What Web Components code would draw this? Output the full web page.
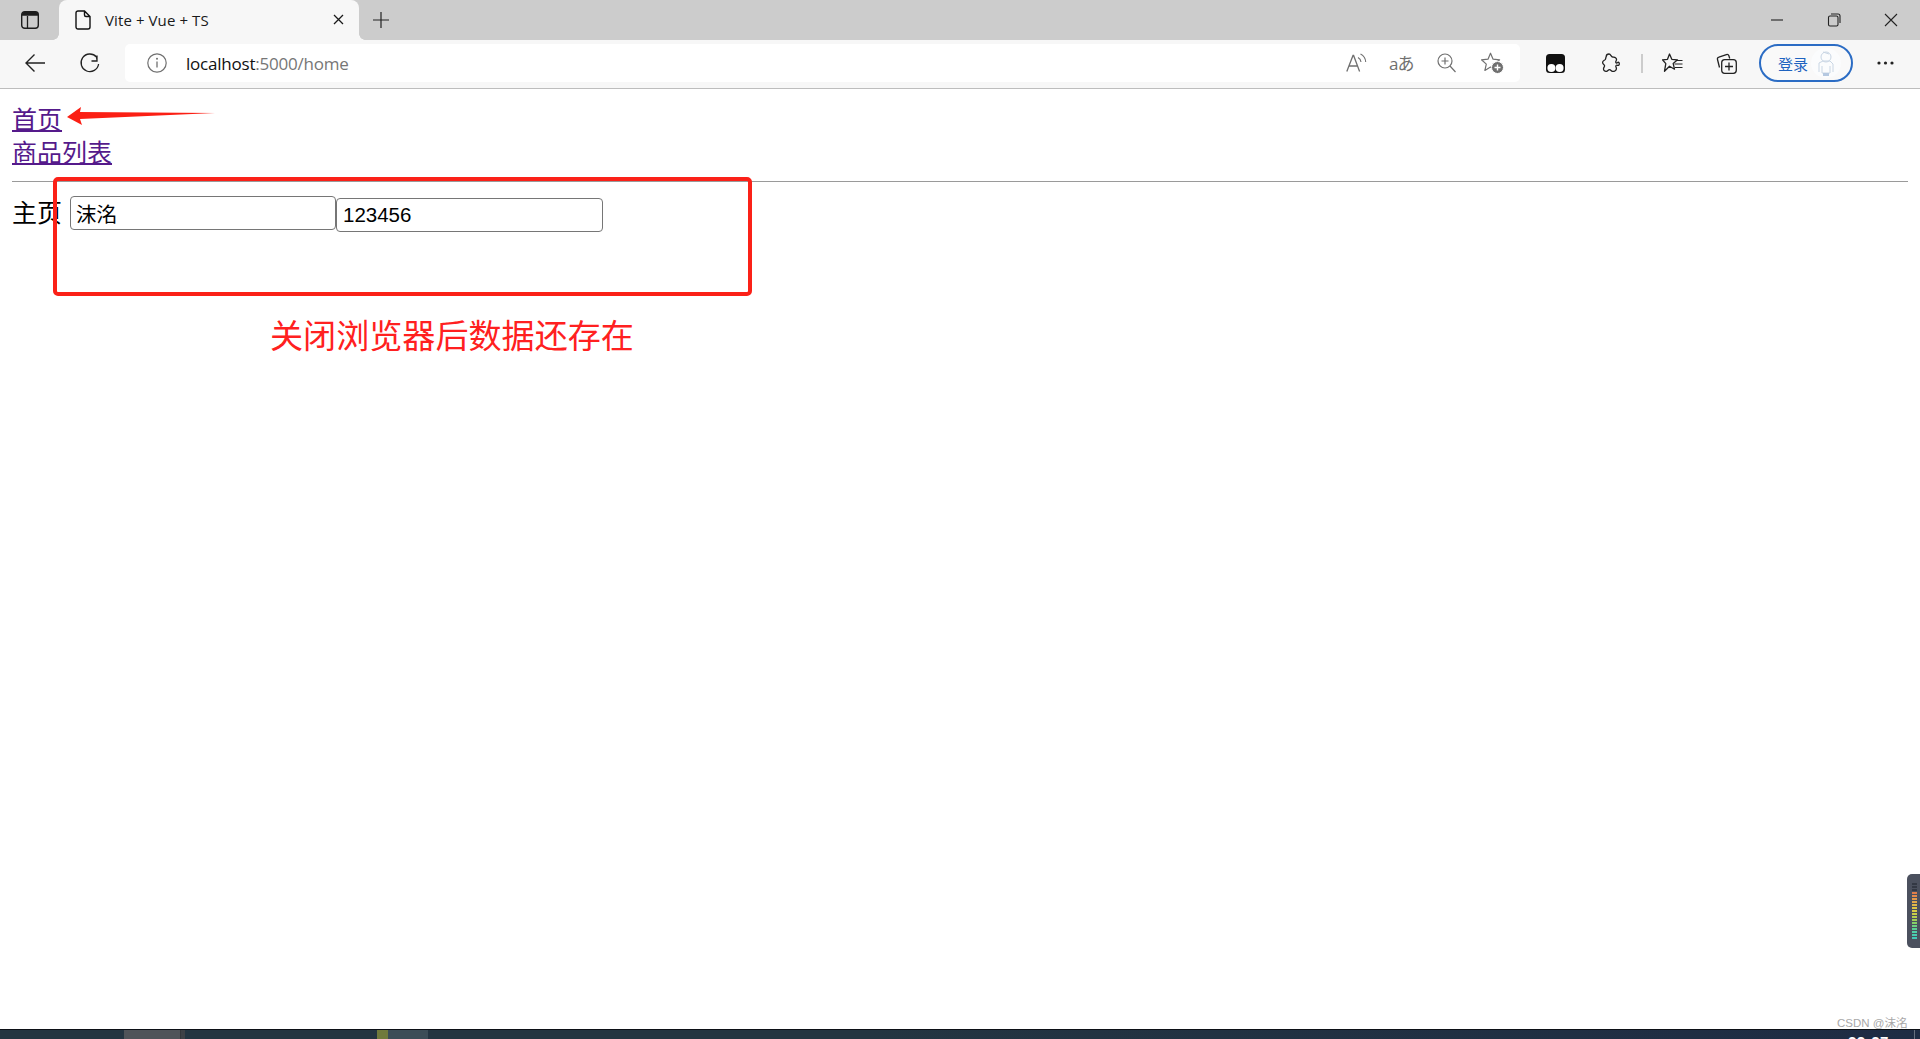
<!doctype html>
<html lang="zh"><head><meta charset="utf-8"><title>Vite + Vue + TS</title>
<style>
html,body{margin:0;height:100%;background:#fff;overflow:hidden}
body{font-family:"Liberation Sans","Noto Sans CJK SC",sans-serif}
x-app{height:1039px}
</style></head><body>
<template id="t-app"><style>
:host{display:flex;flex-direction:column;width:1920px;overflow:hidden}
main{flex:1;position:relative;min-height:0}
</style>
<x-tabstrip></x-tabstrip><x-toolbar></x-toolbar>
<main><x-content></x-content><x-annotations></x-annotations><x-meter></x-meter><x-watermark>CSDN @沫洺</x-watermark></main>
<x-taskbar></x-taskbar></template>

<template id="t-tabstrip"><style>
:host{display:flex;height:40px;background:#ccc;flex:none;align-items:stretch;color:#1a1a1a}
.side{width:59px;display:flex;align-items:center;justify-content:center;box-sizing:border-box}
.tab{width:300px;background:#f7f7f7;border-radius:8px 8px 0 0;display:flex;align-items:center;position:relative;font:15px/38px "Open Sans","Noto Sans",sans-serif;letter-spacing:.1px;padding-bottom:1px;box-sizing:border-box}
.tab::before,.tab::after{content:"";position:absolute;bottom:0;width:6px;height:6px}
.tab::before{left:-6px;background:radial-gradient(circle at 0 0,transparent 5.500px,#f7f7f7 6px)}
.tab::after{right:-6px;background:radial-gradient(circle at 100% 0,transparent 5.500px,#f7f7f7 6px)}
.file{margin-left:16px;width:16px;height:20px}
.title{margin-left:14px;flex:1}
.close{margin-right:15px;display:flex}
.plus{margin-left:14px;width:20px;height:40px;display:flex;align-items:center}
.win{margin-left:auto;display:flex;align-items:center;padding-right:22px;gap:43px}
svg{display:block}
</style>
<div class="side"><svg width="18" height="18" viewBox="0 0 18 18"><rect x=".7" y=".7" width="16.6" height="16.6" rx="3" fill="none" stroke="#1c1c1c" stroke-width="1.4"/><path d="M1 4V3a2 2 0 0 1 2-2h12a2 2 0 0 1 2 2v1.800H1z" fill="#1c1c1c"/><path d="M6.500 5v12" stroke="#1c1c1c" stroke-width="1.300"/></svg></div>
<div class="tab"><svg class="file" viewBox="0 0 16 20"><path d="M3 1h6.500L15 6.500V17a2 2 0 0 1-2 2H3a2 2 0 0 1-2-2V3a2 2 0 0 1 2-2z M9.500 1v4a1.500 1.500 0 0 0 1.500 1.500h4" fill="none" stroke="#111" stroke-width="1.400"/></svg>
<span class="title">Vite + Vue + TS</span>
<span class="close"><svg width="11" height="11" viewBox="0 0 11 11"><path d="M1 1l9 9M10 1l-9 9" stroke="#1a1a1a" stroke-width="1.300"/></svg></span></div>
<div class="plus"><svg width="16" height="16" viewBox="0 0 16 16"><path d="M8 0v16M0 8h16" stroke="#222" stroke-width="1.200"/></svg></div>
<div class="win">
<svg width="14" height="14" viewBox="0 0 14 14"><path d="M1 7h12" stroke="#222" stroke-width="1.100"/></svg>
<svg width="14" height="14" viewBox="0 0 14 14"><rect x="1.500" y="3" width="9.500" height="10" rx="1.500" fill="none" stroke="#222" stroke-width="1.100"/><path d="M4 1h7a2 2 0 0 1 2 2v7" fill="none" stroke="#222" stroke-width="1.100"/></svg>
<svg width="14" height="14" viewBox="0 0 14 14"><path d="M1 1l12 12M13 1L1 13" stroke="#222" stroke-width="1.100"/></svg>
</div></template>

<template id="t-toolbar"><style>
:host{display:flex;flex:none;height:49px;box-sizing:border-box;background:#f7f7f7;border-bottom:1px solid #bdbdbd;align-items:center;padding:0 0 2px 0}
svg{display:block;flex:none}
.addr{width:1395px;height:38px;background:#fff;border-radius:5px;display:flex;align-items:center;box-sizing:border-box;font:17px "Open Sans","Noto Sans",sans-serif;letter-spacing:-.22px;color:#111}
.addr i{font-style:normal;color:#767676}
.url{margin-left:19px;flex:1}
.r{display:flex;align-items:center;margin-right:16px;gap:0}
.aa{font:17px "Open Sans","Noto Sans CJK JP",sans-serif;color:#707070;width:22px;letter-spacing:-1px;white-space:nowrap}
.signin{margin-left:22px;width:94px;height:38px;box-sizing:border-box;border:2px solid #2b6cc4;border-radius:19px;display:flex;align-items:center;font:15px "Noto Sans CJK SC",sans-serif;color:#1e63c0;padding-left:17px;background:#f9f9f9}
.signin span{width:33px}
</style>
<svg style="margin-left:24px" width="22" height="20" viewBox="0 0 22 20"><path d="M21 10H2M10.500 1.500L2 10l8.500 8.500" fill="none" stroke="#222" stroke-width="1.400"/></svg>
<svg style="margin-left:33px" width="22" height="22" viewBox="0 0 22 22"><path d="M18 3.500V9h-5.500M19.600 12A8.800 8.800 0 1 1 17.500 5L18 8.500" fill="none" stroke="#222" stroke-width="1.300"/></svg>
<div class="addr" style="margin-left:24px">
<svg style="margin-left:22px" width="20" height="20" viewBox="0 0 20 20"><circle cx="10" cy="10" r="9.200" fill="none" stroke="#707070" stroke-width="1.200"/><path d="M10 8.500v6" stroke="#707070" stroke-width="1.300"/><circle cx="10" cy="5.800" r="1" fill="#707070"/></svg>
<span class="url">localhost<i>:5000/home</i></span>
<div class="r">
<svg width="21" height="20" viewBox="0 0 21 20"><path d="M.8 18.500L7 2.500h.6l6 16M3 13h9" fill="none" stroke="#707070" stroke-width="1.300"/><path d="M12 4.500a5.500 5.500 0 0 1 3 4.500M14.500 1a9.500 9.500 0 0 1 5.200 8" fill="none" stroke="#707070" stroke-width="1.100"/></svg>
<span class="aa" style="margin-left:22px;margin-top:-2px">aあ</span>
<svg style="margin-left:26px" width="19" height="20" viewBox="0 0 19 20"><circle cx="8" cy="8" r="7" fill="none" stroke="#707070" stroke-width="1.200"/><path d="M13 13l5.500 6M8 4.500v7M4.500 8h7" stroke="#707070" stroke-width="1.200" fill="none"/></svg>
<svg style="margin-left:25px" width="23" height="22" viewBox="0 0 23 22"><path d="M9.500 1.200l2.600 6 6.500.600-4.800 4.300 1.400 6.300-5.700-3.300-5.600 3.300 1.400-6.300L.500 7.800 7 7.200z" fill="none" stroke="#707070" stroke-width="1.200" stroke-linejoin="round"/><circle cx="16.500" cy="15.500" r="6" fill="#707070" stroke="#fff"/><path d="M16.500 12.500v6M13.500 15.500h6" stroke="#fff" stroke-width="1.400"/></svg>
</div></div>
<svg style="margin-left:26px" width="19" height="19" viewBox="0 0 19 19"><rect width="19" height="19" rx="3.500" fill="#111"/><circle cx="5.400" cy="14" r="4" fill="#fff"/><circle cx="13.600" cy="14" r="4" fill="#fff"/></svg>
<svg style="margin-left:36px" width="20" height="20" viewBox="0 0 20 20"><path d="M8 1c1.800 0 2 2.500 3.500 3 1.800.4 3.800.3 4 2.200.2 1.500-.9 2-.8 3 .2 1 1.300 1 1.800.4.700-.7 1.800-.3 1.800 1.100 0 1.500-.9 2-1.800 1.600-.8-.4-1.700 0-1.700 1 0 .9.800 1.300.6 2.600-.3 1.900-2.400 2.800-3.900 2.500-1.400-.3-1.700-1.700-3-1.700s-1.700 1.400-3 1.700c-1.700.3-3-1-3-2.500s1.100-1.900 1.100-3.100-2-1.600-2-3.300 1.900-2.100 2.600-2.900c.7-.9.400-1.900 1-3C5.300 2 6.500 1 8 1z" fill="none" stroke="#222" stroke-width="1.300"/></svg>
<div style="margin-left:20px;width:2px;height:19px;background:#ccc;flex:none"></div>
<svg style="margin-left:19px" width="21" height="20" viewBox="0 0 21 20"><path d="M7.500 1l2.300 5.300 5.700.500-4.300 3.800 1.300 5.600-5-3-5 5 1.300-7.600L.500 6.800l5-.500z" fill="none" stroke="#222" stroke-width="1.300" stroke-linejoin="round"/><path d="M14 7.500h6.500M12.500 11h8M13 14.500h7.500" stroke="#222" stroke-width="1.200"/></svg>
<svg style="margin-left:33px" width="21" height="21" viewBox="0 0 21 21"><path d="M3.500 14.500L1.500 6.500a2 2 0 0 1 1.400-2.400l7.500-2.500a2 2 0 0 1 2.500 1.200l.8 2.700" fill="none" stroke="#222" stroke-width="1.300"/><rect x="5.700" y="6.700" width="14.600" height="13.600" rx="3" fill="none" stroke="#222" stroke-width="1.300"/><path d="M13 9.500v8M9 13.500h8" stroke="#222" stroke-width="1.300"/></svg>
<div class="signin"><span>登录</span>
<svg width="30" height="30" viewBox="0 0 30 30"><circle cx="15" cy="15" r="15" fill="#fbfcfd"/><g fill="none" stroke="#c9d6e4" stroke-width="1"><circle cx="15" cy="9" r="5"/><path d="M8 24V15l4-2h7l3 3v8M11 18v7h8v-7M12 4l6 2"/></g><path d="M12 25h6v3h-6z" fill="#b5c8e0"/></svg></div>
<svg style="margin-left:24px" width="17" height="4" viewBox="0 0 17 4"><circle cx="2" cy="2" r="1.600" fill="#222"/><circle cx="8.500" cy="2" r="1.600" fill="#222"/><circle cx="15" cy="2" r="1.600" fill="#222"/></svg>
</template>

<template id="t-content"><style>
:host{display:block;padding:13px 12px 0;font:25px/33px "Noto Sans CJK SC",sans-serif;color:#000}
a{display:table;color:#551a8b;text-decoration:underline;text-decoration-thickness:2px;text-underline-offset:1px}
hr{margin:13px 0 0;border:0;border-top:1px solid #9a9a9a;height:1px}
.row{display:flex;margin-top:13px;align-items:flex-start;gap:8px}
.row span.lbl{height:34px;line-height:30px}
</style>
<a href="#">首页</a><a href="#">商品列表</a><hr>
<div class="row"><span class="lbl">主页</span><x-field style="margin-right:-8px">沫洺</x-field><x-field style="margin-top:2px;width:267px;padding-left:6px">123456</x-field></div>
</template>

<template id="t-field"><style>
:host{display:flex;align-items:center;width:266px;height:34px;box-sizing:border-box;border:1.500px solid #767676;border-radius:4px;padding:0 6px 0 5px;background:#fff;font:20.500px "Liberation Sans","Noto Sans CJK SC",sans-serif;color:#000}
</style><slot></slot></template>

<template id="t-ann"><style>
:host{display:block}
svg{position:absolute;left:60px;top:14px}
.box{position:absolute;left:53px;top:88px;width:699px;height:119px;box-sizing:border-box;border:4px solid #fb2118;border-radius:5px}
.note{position:absolute;left:270px;top:222px;font:33.100px/46px "Noto Sans CJK SC",sans-serif;color:#ff2020;white-space:nowrap}
</style>
<svg width="160" height="30" viewBox="0 0 160 30"><path d="M7 14L21 4l-1 5 135 1-135 6 2 6z" fill="#fb1f14"/></svg>
<div class="box"></div><div class="note">关闭浏览器后数据还存在</div></template>

<template id="t-meter"><style>
:host{position:absolute;left:1907px;top:785px;width:13px;height:74px;background:#4b505e;border-radius:5px 0 0 5px;box-sizing:border-box;padding:9px 3px 9px 5px;display:flex;flex-direction:column;justify-content:space-between}
i{display:block;height:1.500px}
</style></template>

<template id="t-mark"><style>
:host{position:absolute;left:1837px;top:927px;font:11.500px/14px "Liberation Sans","Noto Sans CJK SC",sans-serif;color:#a8a8a8;white-space:nowrap}
</style><slot></slot></template>

<template id="t-task"><style>
:host{display:flex;flex:none;height:10px;box-sizing:border-box;border-top:1px solid #0c1016;background:linear-gradient(90deg,#233541,#233541 45%,#1e2c44);position:relative;overflow:hidden}
b{display:block;height:100%}
.time{position:absolute;left:1848px;top:3px;font:bold 15px/18px "Liberation Sans",sans-serif;color:#fff;letter-spacing:.5px}
.sep{position:absolute;left:1914px;top:0;width:1px;height:100%;background:#66707f}
</style>
<b style="margin-left:124px;width:56px;background:#4f5459"></b><b style="width:1px;background:#33373b"></b><b style="width:4px;background:#3d4146"></b>
<b style="margin-left:192px;width:11px;background:#707a3c"></b><b style="width:40px;background:#3b4d57"></b>
<span class="time">22:27</span><span class="sep"></span></template>

<x-app></x-app>
<script>
function def(name,tpl,init){customElements.define(name,class extends HTMLElement{constructor(){super();this.attachShadow({mode:"open"}).appendChild(document.getElementById(tpl).content.cloneNode(true));if(init)init(this.shadowRoot)}})}
def("x-tabstrip","t-tabstrip");def("x-toolbar","t-toolbar");def("x-content","t-content");def("x-field","t-field");
def("x-annotations","t-ann");def("x-watermark","t-mark");def("x-taskbar","t-task");
def("x-meter","t-meter",function(r){
 var c=["#333844","#333844","#333844","#e07d4a","#e58a4c","#e49a4c","#e3a94a","#e2b848","#e0c645","#d8cd45","#c8d048","#b5d050","#9fd058","#85d068","#6dd080","#5ad095","#4fd0a8","#48ccb0","#42c8b8"];
 c.forEach(function(x){var i=document.createElement("i");i.style.background=x;r.appendChild(i)})
});
def("x-app","t-app");
</script>
</body></html>
